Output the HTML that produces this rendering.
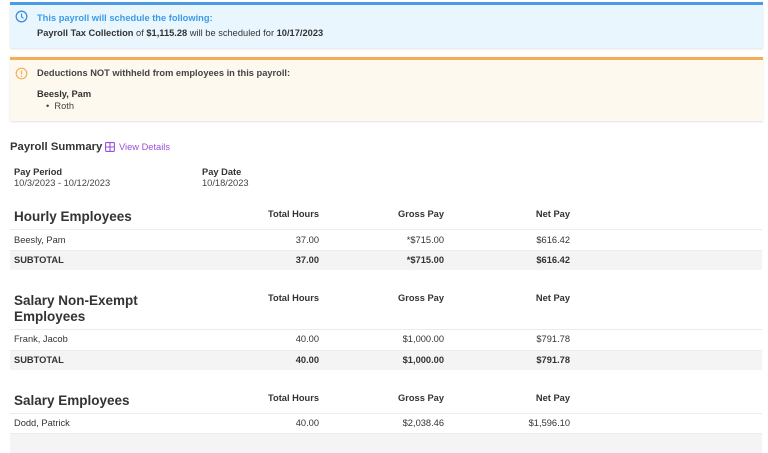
<!DOCTYPE html>
<html><head><style>
*{margin:0;padding:0;box-sizing:border-box}
body{width:768px;height:439px;overflow:hidden;background:#fff;font-family:"Liberation Sans",sans-serif;color:#333;position:relative;font-size:9.3px}
.a{position:absolute;white-space:nowrap}
.b{font-weight:bold}
.r{text-align:right}
.h{font-size:13.5px;font-weight:bold;color:#333;line-height:16px}
.line{position:absolute;left:10px;width:752px;height:1px;background:#ececec}
.sub{position:absolute;left:10px;width:752px;height:20px;background:#f4f4f4}
</style></head><body>
<div class="a" style="left:10px;top:2px;width:753px;height:46px;background:#eaf6fe;border-top:3px solid #4a9be4;box-shadow:0 1px 2px rgba(0,0,0,.12)"></div>
<svg class="a" style="left:15px;top:10px" width="13" height="13" viewBox="0 0 13 13"><circle cx="6.5" cy="6.5" r="5.3" fill="none" stroke="#3b8ee0" stroke-width="1.3"/><path d="M6.5 3.5V6.8L8.5 8.3" fill="none" stroke="#3b8ee0" stroke-width="1.2"/></svg>
<div class="a b" style="left:37px;top:13px;color:#3b9be8">This payroll will schedule the following:</div>
<div class="a" style="left:37px;top:28px;color:#333"><b>Payroll Tax Collection</b> of <b>$1,115.28</b> will be scheduled for <b>10/17/2023</b></div>

<div class="a" style="left:10px;top:57px;width:753px;height:64px;background:#fdf9ef;border-top:3px solid #f7ad55;box-shadow:0 1px 2px rgba(0,0,0,.12)"></div>
<svg class="a" style="left:15px;top:67px" width="13" height="13" viewBox="0 0 13 13"><circle cx="6.5" cy="6.5" r="5.3" fill="none" stroke="#f5ad58" stroke-width="1.2"/><path d="M6.5 3.5V7.3" stroke="#f5ad58" stroke-width="1.3"/><circle cx="6.5" cy="9.2" r=".75" fill="#f5ad58"/></svg>
<div class="a b" style="left:37px;top:68px;color:#444">Deductions NOT withheld from employees in this payroll:</div>
<div class="a b" style="left:37px;top:89px;color:#333">Beesly, Pam</div>
<div class="a" style="left:46px;top:101px;color:#444">•&nbsp; Roth</div>

<div class="a" style="left:10px;top:141px;font-size:11.3px;font-weight:bold;color:#333">Payroll Summary</div>
<svg class="a" style="left:105px;top:142px" width="10" height="10" viewBox="0 0 10 10"><rect x=".6" y=".6" width="8.8" height="8.8" rx="1" fill="none" stroke="#9b4fd6" stroke-width="1.1"/><path d="M5 .6V9.4M.6 5H9.4" stroke="#9b4fd6" stroke-width="1.1"/></svg>
<div class="a" style="left:119px;top:142px;color:#9b4fd6">View Details</div>

<div class="a b" style="left:14px;top:167px">Pay Period</div>
<div class="a" style="left:14px;top:178px;color:#444">10/3/2023 - 10/12/2023</div>
<div class="a b" style="left:202px;top:167px">Pay Date</div>
<div class="a" style="left:202px;top:178px;color:#444">10/18/2023</div>

<div class="a h" style="left:14px;top:209px">Hourly Employees</div>
<div class="a b r" style="left:219px;width:100px;top:209px">Total Hours</div>
<div class="a b r" style="left:344px;width:100px;top:209px">Gross Pay</div>
<div class="a b r" style="left:470px;width:100px;top:209px">Net Pay</div>
<div class="line" style="top:229px"></div>
<div class="a" style="left:14px;top:235px">Beesly, Pam</div>
<div class="a r" style="left:219px;width:100px;top:235px">37.00</div>
<div class="a r" style="left:344px;width:100px;top:235px">*$715.00</div>
<div class="a r" style="left:470px;width:100px;top:235px">$616.42</div>
<div class="sub" style="top:250px"></div>
<div class="line" style="top:250px"></div>
<div class="a b" style="left:14px;top:255px">SUBTOTAL</div>
<div class="a b r" style="left:219px;width:100px;top:255px">37.00</div>
<div class="a b r" style="left:344px;width:100px;top:255px">*$715.00</div>
<div class="a b r" style="left:470px;width:100px;top:255px">$616.42</div>

<div class="a h" style="left:14px;top:293px">Salary Non-Exempt<br>Employees</div>
<div class="a b r" style="left:219px;width:100px;top:293px">Total Hours</div>
<div class="a b r" style="left:344px;width:100px;top:293px">Gross Pay</div>
<div class="a b r" style="left:470px;width:100px;top:293px">Net Pay</div>
<div class="line" style="top:329px"></div>
<div class="a" style="left:14px;top:334px">Frank, Jacob</div>
<div class="a r" style="left:219px;width:100px;top:334px">40.00</div>
<div class="a r" style="left:344px;width:100px;top:334px">$1,000.00</div>
<div class="a r" style="left:470px;width:100px;top:334px">$791.78</div>
<div class="sub" style="top:350px"></div>
<div class="line" style="top:350px"></div>
<div class="a b" style="left:14px;top:355px">SUBTOTAL</div>
<div class="a b r" style="left:219px;width:100px;top:355px">40.00</div>
<div class="a b r" style="left:344px;width:100px;top:355px">$1,000.00</div>
<div class="a b r" style="left:470px;width:100px;top:355px">$791.78</div>

<div class="a h" style="left:14px;top:393px">Salary Employees</div>
<div class="a b r" style="left:219px;width:100px;top:393px">Total Hours</div>
<div class="a b r" style="left:344px;width:100px;top:393px">Gross Pay</div>
<div class="a b r" style="left:470px;width:100px;top:393px">Net Pay</div>
<div class="line" style="top:413px"></div>
<div class="a" style="left:14px;top:418px">Dodd, Patrick</div>
<div class="a r" style="left:219px;width:100px;top:418px">40.00</div>
<div class="a r" style="left:344px;width:100px;top:418px">$2,038.46</div>
<div class="a r" style="left:470px;width:100px;top:418px">$1,596.10</div>
<div class="sub" style="top:433px"></div>
<div class="line" style="top:433px"></div>
</body></html>
